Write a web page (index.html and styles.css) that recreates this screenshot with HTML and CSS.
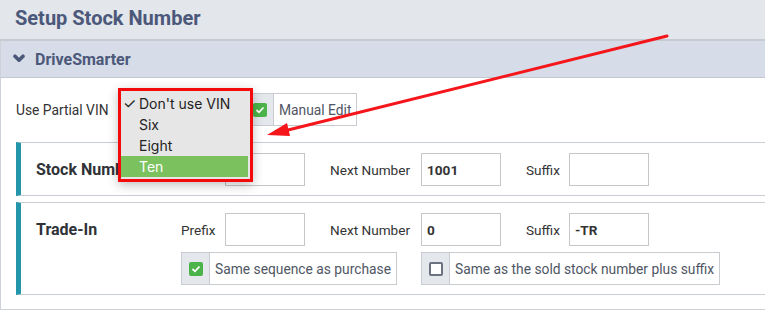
FILE: index.html
```html
<!DOCTYPE html>
<html lang="en">
<head>
    <meta charset="UTF-8">
    <meta name="viewport" content="width=device-width, initial-scale=1.0">
    <title>Setup Stock Number</title>
    <link rel="stylesheet" href="styles.css">
</head>
<body>
    <div class="page">
        <div class="page-title">Setup Stock Number</div>

        <div class="panel">
            <div class="panel-head">
                <svg class="chevron" width="12" height="10" viewBox="0 0 12 10"><polyline points="2,2.2 6,6.2 10,2.2" fill="none" stroke="#4b587a" stroke-width="3.6" stroke-linecap="round" stroke-linejoin="round"/></svg>
                DriveSmarter
            </div>

            <div class="panel-body">
                <div class="vin-row">
                    <span class="vin-label">Use Partial VIN</span>
                    <div class="select"></div>
                    <div class="check-group">
                        <span class="addon"><span class="box checked"><svg width="10" height="8" viewBox="0 0 10 8"><polyline points="1.5,4 4,6.3 8.5,1.5" fill="none" stroke="#fff" stroke-width="1.8"/></svg></span></span>
                        <span class="check-text">Manual Edit</span>
                    </div>
                </div>

                <div class="card">
                    <div class="card-title">Stock Number</div>
                    <div class="card-fields">
                        <div class="field-row">
                            <span class="lbl lbl-prefix">Prefix</span>
                            <input class="input" type="text" value="">
                            <span class="lbl lbl-next">Next Number</span>
                            <input class="input" type="text" value="1001">
                            <span class="lbl lbl-suffix">Suffix</span>
                            <input class="input" type="text" value="">
                        </div>
                    </div>
                </div>

                <div class="card">
                    <div class="card-title">Trade-In</div>
                    <div class="card-fields">
                        <div class="field-row">
                            <span class="lbl lbl-prefix">Prefix</span>
                            <input class="input" type="text" value="">
                            <span class="lbl lbl-next">Next Number</span>
                            <input class="input" type="text" value="0">
                            <span class="lbl lbl-suffix">Suffix</span>
                            <input class="input" type="text" value="-TR">
                        </div>
                        <div class="check-row">
                            <div class="check-group">
                                <span class="addon"><span class="box checked"><svg width="10" height="8" viewBox="0 0 10 8"><polyline points="1.5,4 4,6.3 8.5,1.5" fill="none" stroke="#fff" stroke-width="1.8"/></svg></span></span>
                                <span class="check-text">Same sequence as purchase</span>
                            </div>
                            <div class="check-group">
                                <span class="addon"><span class="box"></span></span>
                                <span class="check-text">Same as the sold stock number plus suffix</span>
                            </div>
                        </div>
                    </div>
                </div>
            </div>
        </div>

        <!-- open dropdown of the Use Partial VIN select -->
        <div class="menu">
            <div class="menu-item"><span class="tick">&#10003;</span>Don't use VIN</div>
            <div class="menu-item">Six</div>
            <div class="menu-item">Eight</div>
            <div class="menu-item active">Ten</div>
        </div>

        <svg class="arrow" width="765" height="313" viewBox="0 0 765 313">
            <line x1="667" y1="36" x2="284" y2="131" stroke="#f5161b" stroke-width="3" stroke-linecap="round"/>
            <polygon points="267,135 290,136 287,123" fill="#f5161b"/>
        </svg>
    </div>
</body>
</html>
```

FILE: styles.css
```css
html, body{
    margin: 0;
    overflow: hidden;
}
body{
    font-family: Roboto, "Liberation Sans", sans-serif;
    background-color: #fff;
    color: #333;
}
.page{
    position: relative;
    width: 790px;
    height: 313px;
}
.page-title{
    height: 39px;
    line-height: 37px;
    padding-left: 15px;
    background-color: #e3e6eb;
    border-bottom: 2px solid #c6cbd1;
    color: #4b587a;
    font-size: 20px;
    font-weight: bold;
}
.panel{
    border-left: 1px solid #cdd2d8;
    border-bottom: 1px solid #cdd2d8;
}
.panel-head{
    height: 36px;
    display: flex;
    align-items: center;
    gap: 10px;
    padding-left: 12px;
    background-color: #d6dde8;
    border-bottom: 1px solid #c3c9d1;
    color: #4b587a;
    font-size: 16px;
    font-weight: bold;
}
.panel-body{
    padding: 15px 0 14px 15px;
}
.vin-row{
    display: flex;
    align-items: center;
    height: 33px;
    margin-bottom: 16px;
    font-size: 13.8px;
}
.vin-label{
    width: 102px;
}
.select{
    width: 118px;
    height: 33px;
    box-sizing: border-box;
    border: 1px solid #c7c7c7;
    margin-right: 9px;
}
.check-group{
    display: flex;
    height: 33px;
    box-sizing: border-box;
    border: 1px solid #c8ccd1;
    font-size: 13.8px;
    color: #4f5663;
}
.addon{
    width: 27px;
    display: flex;
    align-items: center;
    justify-content: center;
    background-color: #e4e7ec;
    border-right: 1px solid #c8ccd1;
}
.box{
    width: 14px;
    height: 14px;
    box-sizing: border-box;
    border: 2px solid #6b7280;
    border-radius: 2px;
    background-color: #fff;
    display: flex;
    align-items: center;
    justify-content: center;
}
.box.checked{
    border: none;
    background-color: #4cb34a;
}
.check-text{
    display: flex;
    align-items: center;
    padding: 0 5px 0 5px;
    background-color: #fff;
}
.card{
    display: flex;
    border: 1px solid #c9ced5;
    border-left: 5px solid #2496ab;
    border-right: none;
    padding: 10px 0 9px 15px;
    margin-bottom: 6px;
}
.card:last-child{
    margin-bottom: 0;
}
.card-title{
    width: 145px;
    line-height: 33px;
    font-size: 16px;
    font-weight: bold;
    color: #2f3237;
}
.card-fields{
    display: flex;
    flex-direction: column;
    gap: 6px;
}
.field-row{
    display: flex;
    align-items: center;
    font-size: 13.6px;
}
.lbl-prefix{
    width: 44px;
}
.lbl-next{
    width: 91px;
    margin-left: 25px;
}
.lbl-suffix{
    width: 43px;
    margin-left: 25px;
}
.input{
    width: 80px;
    height: 33px;
    box-sizing: border-box;
    border: 1px solid #c7c7c7;
    padding: 0 5px;
    font-family: Roboto, "Liberation Sans", sans-serif;
    font-size: 13.6px;
    font-weight: bold;
    color: #333;
    outline: none;
}
.check-row{
    display: grid;
    grid-template-columns: 240px auto;
    justify-items: start;
}
.menu{
    position: absolute;
    left: 118px;
    top: 88px;
    width: 135px;
    height: 94px;
    box-sizing: border-box;
    border: 3px solid #f40a0a;
    padding: 2px 0;
    background-color: #e6e6e6;
    box-shadow: 0 3px 10px rgba(0, 0, 0, 0.25);
    font-family: Inter, Roboto, sans-serif;
    font-size: 14px;
    color: #222;
}
.menu-item{
    position: relative;
    height: 21px;
    line-height: 21px;
    padding-left: 18px;
    margin-right: 2px;
}
.menu-item.active{
    background-color: #7bc25f;
    color: #fff;
}
.tick{
    position: absolute;
    left: 2px;
    font-size: 15px;
}
.arrow{
    position: absolute;
    left: 0;
    top: 0;
    pointer-events: none;
}
```
